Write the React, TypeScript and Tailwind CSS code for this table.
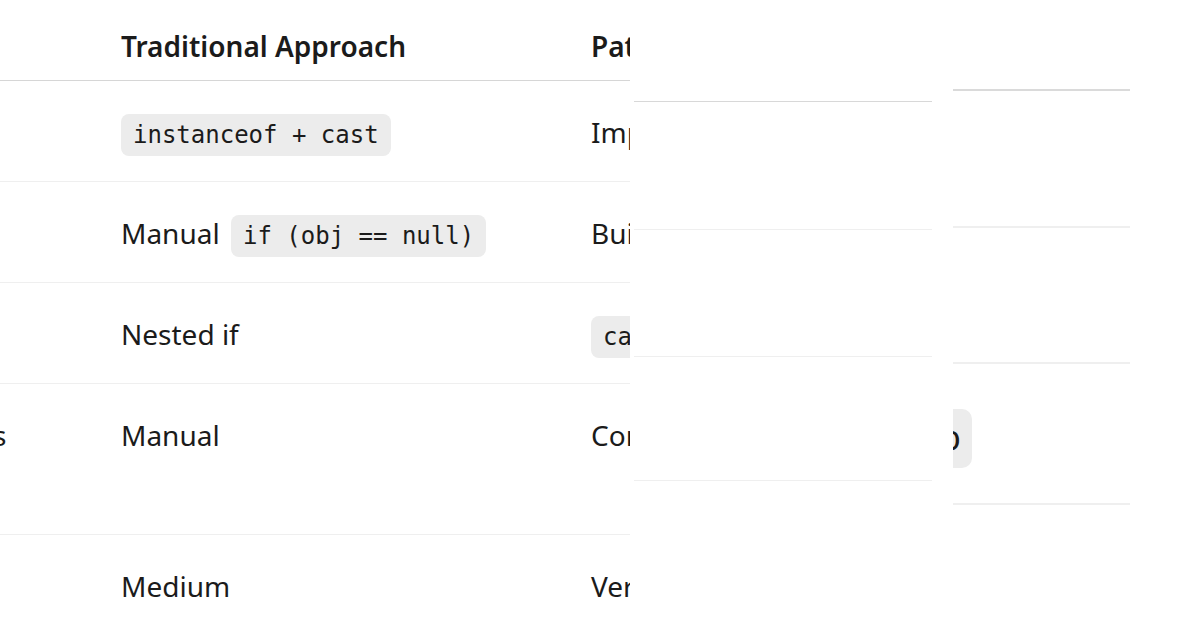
const rows = [
  {
    aspect: "Typing",
    old: <Code>instanceof + cast</Code>,
    next: "Implicit in the pattern",
    h: "h-[101px]",
  },
  {
    aspect: "Nulls",
    old: (
      <>
        Manual <Code className="ml-[4px]">if (obj == null)</Code>
      </>
    ),
    next: "Built-in case null",
    h: "h-[101px]",
  },
  {
    aspect: "Records",
    old: "Nested if",
    next: <Code>case Point(int x, int y)</Code>,
    h: "h-[101px]",
  },
  {
    aspect: "Exhaustiveness",
    old: "Manual",
    next: "Compiler-enforced for sealed types",
    h: "h-[151px]",
  },
  {
    aspect: "Clarity",
    old: "Medium",
    next: "Very high",
    h: "h-[101px]",
  },
];

function Code({ children, className = "" }: { children: React.ReactNode; className?: string }) {
  return (
    <code
      className={`rounded-[8px] bg-[#ececec] px-[12px] py-[7px] font-['DejaVu_Sans_Mono',monospace] text-[24px] leading-none text-[#1b1b1b] ${className}`}
    >
      {children}
    </code>
  );
}

export default function App() {
  return (
    <div className="relative h-[630px] w-[1200px] overflow-hidden bg-white font-['Noto_Sans',sans-serif] text-[#1b1b1b]">
      {/* table, scrolled sideways and clipped */}
      <div className="w-[630px] overflow-hidden">
        <div className="-ml-[200px] w-[1200px]">
          <div className="flex h-[81px] border-b border-[#d6d6d6] pt-[24px] text-[28px] font-semibold leading-[44px]">
            <div className="w-[321px] shrink-0 pl-[5px]">Aspect</div>
            <div className="w-[470px] shrink-0">Traditional Approach</div>
            <div className="whitespace-nowrap">Pattern Matching</div>
          </div>
          {rows.map((r) => (
            <div
              key={r.aspect}
              className={`flex ${r.h} items-start border-b border-[#efefef] pt-[29px] text-[28px] leading-[44px]`}
            >
              <div className="w-[321px] shrink-0 pl-[5px]">{r.aspect}</div>
              <div className="w-[470px] shrink-0 whitespace-nowrap">{r.old}</div>
              <div className="whitespace-nowrap">{r.next}</div>
            </div>
          ))}
        </div>
      </div>

      {/* stale repaint fragments over the right side */}
      <div className="absolute top-0 left-[630px] h-full w-[570px] bg-white">
        <div className="absolute top-0 left-[4px] w-[298px]">
          <div className="h-[102px] border-b border-[#d8d8d8]" />
          <div className="h-[128px] border-b border-[#efefef]" />
          <div className="h-[127px] border-b border-[#efefef]" />
          <div className="h-[124px] border-b border-[#efefef]" />
        </div>
        <div className="absolute top-0 left-[323px] w-[177px] overflow-hidden">
          <div className="h-[91px] border-b-2 border-[#dadada]" />
          <div className="h-[137px] border-b-2 border-[#efefef]" />
          <div className="h-[136px] border-b-2 border-[#efefef]" />
          <div className="relative h-[141px] border-b-2 border-[#efefef]">
            <div className="absolute top-[45px] -left-[60px] h-[59px] w-[79px] rounded-[10px] bg-[#ececec] pr-[11px] text-right font-['DejaVu_Sans_Mono',monospace] text-[34px] leading-[59px] text-[#1b1b1b]">
              b
            </div>
          </div>
        </div>
      </div>
    </div>
  );
}
